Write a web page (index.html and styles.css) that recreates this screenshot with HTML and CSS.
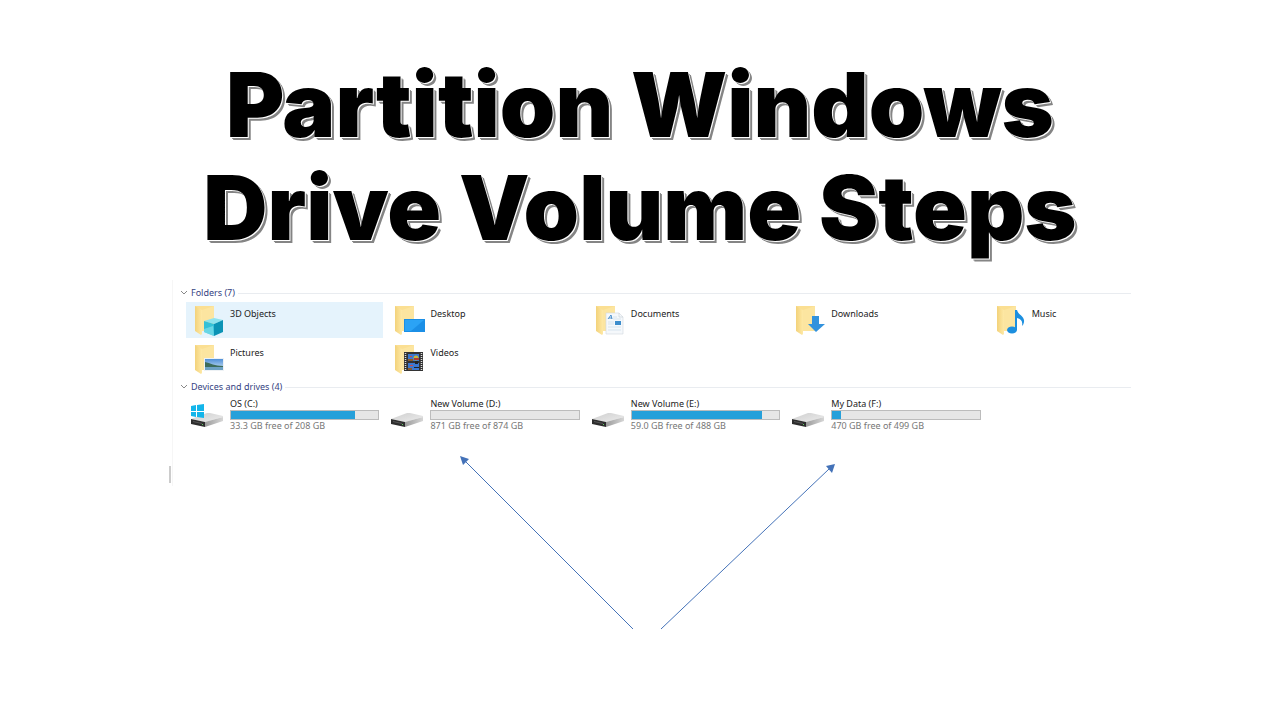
FILE: index.html
```
<!DOCTYPE html>
<html lang="en">

<head>
    <meta charset="UTF-8">
    <meta name="viewport" content="width=device-width, initial-scale=1.0">
    <title>Partition Windows Drive Volume Steps</title>
    <link rel="stylesheet" href="styles.css">
</head>

<body>
    <!-- shared icon shapes -->
    <svg class="defs" width="0" height="0" aria-hidden="true">
        <defs>
            <linearGradient id="folderFront" x1="0" y1="0" x2="1" y2="0">
                <stop offset="0" stop-color="#f3d27a" />
                <stop offset="1" stop-color="#fee9a6" />
            </linearGradient>
            <linearGradient id="driveTop" x1="0" y1="0" x2="1" y2="1">
                <stop offset="0" stop-color="#cfcfcf" />
                <stop offset="1" stop-color="#ececec" />
            </linearGradient>
            <linearGradient id="driveSide" x1="0" y1="0" x2="1" y2="0">
                <stop offset="0" stop-color="#9c9c9c" />
                <stop offset="1" stop-color="#d6d6d6" />
            </linearGradient>
            <linearGradient id="sky" x1="0" y1="0" x2="0" y2="1">
                <stop offset="0" stop-color="#4f8fd8" />
                <stop offset="1" stop-color="#d5e9f5" />
            </linearGradient>
            <symbol id="folder" viewBox="0 0 36 32">
                <path d="M5 1h19v25H10z" fill="#fbdf92" />
                <path d="M5 1l7 4v24l-1 1-6-4z" fill="url(#folderFront)" />
                <path d="M12 5l12-4v25H12z" fill="#fce5a0" />
            </symbol>
            <symbol id="drive" viewBox="0 0 36 32">
                <path d="M1 21l16-6h3l13 3v1l-18 5z" fill="url(#driveTop)" />
                <path d="M1 21l14 3v5L1 26z" fill="#2d2d2d" />
                <path d="M15 24l18-5v4l-18 6z" fill="url(#driveSide)" />
                <path d="M3 23l9 2v1l-9-2z" fill="#555" />
                <path d="M12 26h1v1h-1z" fill="#5fd35f" />
            </symbol>
        </defs>
    </svg>

    <main class="slide">
        <h1 class="title">Partition Windows<br>Drive Volume Steps</h1>

        <div class="explorer">
            <section class="group">
                <h2 class="group-title">
                    <svg class="chevron" viewBox="0 0 8 6"><path d="M1 1l3 3 3-3" /></svg>
                    Folders (7)
                </h2>
                <div class="grid folders">
                    <a class="item selected" href="#">
                        <svg class="icon" viewBox="0 0 36 32">
                            <use href="#folder" />
                            <path d="M14 16l10-3 9 2-9 4z" fill="#8fe3ee" />
                            <path d="M14 16l10 3v12l-10-4z" fill="#35c1d8" />
                            <path d="M24 19l9-4v12l-9 4z" fill="#0b93b5" />
                            <path d="M14 24l9-3 1 10-10-4z" fill="#8ce4ee" opacity=".6" />
                        </svg>
                        <span class="name">3D Objects</span>
                    </a>
                    <a class="item" href="#">
                        <svg class="icon" viewBox="0 0 36 32">
                            <use href="#folder" />
                            <path d="M14 14h21v13H14z" fill="#1b8fe6" />
                            <path d="M15 15h19l-13 11h-6z" fill="#2ba3f5" />
                        </svg>
                        <span class="name">Desktop</span>
                    </a>
                    <a class="item" href="#">
                        <svg class="icon" viewBox="0 0 36 32">
                            <use href="#folder" />
                            <path d="M15 8h13l4 4v17H15z" fill="#f5f8fb" stroke="#d0d7de" stroke-width=".6" />
                            <path d="M28 8v4h4" fill="none" stroke="#c4ccd4" stroke-width=".6" />
                            <path d="M17 14l3-4 1 4M18 13h3" fill="none" stroke="#3b86c6" stroke-width=".9" />
                            <path d="M22 12h4M22 14h8M17 17h6M17 19h6M17 22h13M17 25h13" stroke="#cbdcea" stroke-width=".7" />
                            <path d="M24 16h6v4h-6z" fill="#3d8dcc" />
                        </svg>
                        <span class="name">Documents</span>
                    </a>
                    <a class="item" href="#">
                        <svg class="icon" viewBox="0 0 36 32">
                            <use href="#folder" />
                            <path d="M21 11h7v8h6l-9 8-8-8h4z" fill="#3292dd" />
                        </svg>
                        <span class="name">Downloads</span>
                    </a>
                    <a class="item" href="#">
                        <svg class="icon" viewBox="0 0 36 32">
                            <use href="#folder" />
                            <ellipse cx="20" cy="25" rx="5" ry="3.500" fill="#1c8fdf" />
                            <path d="M23 5h2c1 5 8 6 7 12-.3 2-1 3-2 4 1-5-1-7-5-8v12h-2z" fill="#1c8fdf" />
                        </svg>
                        <span class="name">Music</span>
                    </a>
                    <a class="item" href="#">
                        <svg class="icon" viewBox="0 0 36 32">
                            <use href="#folder" />
                            <path d="M14 14h20v13H14z" fill="#eef2f5" />
                            <path d="M15 15h18v11H15z" fill="url(#sky)" />
                            <path d="M15 18c5 1 10 4 18 4v1H15z" fill="#3d6c5a" />
                            <path d="M15 23h18v3H15z" fill="#6ea2c4" />
                        </svg>
                        <span class="name">Pictures</span>
                    </a>
                    <a class="item" href="#">
                        <svg class="icon" viewBox="0 0 36 32">
                            <use href="#folder" />
                            <path d="M14 8h19v19H14z" fill="#333" />
                            <path d="M15.500 9v18M31.500 9v18" stroke="#ddd" stroke-width="1.500" stroke-dasharray="1 1" />
                            <path d="M18 10h11v7H18zM18 19h11v7H18z" fill="#3c78cf" />
                            <path d="M18 15h5v2h-5zM18 24h4v2h-4z" fill="#8b5a2b" />
                            <circle cx="26" cy="14" r="2.500" fill="#c8b93a" />
                            <path d="M24 14h5v2h-5z" fill="#b03a35" />
                            <path d="M25 17h3v3h-3zM24 23h5v1h-5z" fill="#222" />
                            <path d="M20 12h2v1h-2zM20 21h3v1h-3z" fill="#d5483f" />
                        </svg>
                        <span class="name">Videos</span>
                    </a>
                </div>
            </section>

            <section class="group">
                <h2 class="group-title">
                    <svg class="chevron" viewBox="0 0 8 6"><path d="M1 1l3 3 3-3" /></svg>
                    Devices and drives (4)
                </h2>
                <div class="grid drives">
                    <a class="item" href="#">
                        <svg class="icon" viewBox="0 0 36 32">
                            <use href="#drive" />
                            <path d="M1 8l5-1v6H1zM7 7l7-1v7H7zM1 14h5v5l-5-1zM7 14h7v6l-7-1z" fill="#13b5ea" />
                        </svg>
                        <span class="info">
                            <span class="name">OS (C:)</span>
                            <span class="bar"><span class="used" style="width: 84%"></span></span>
                            <span class="free">33.3 GB free of 208 GB</span>
                        </span>
                    </a>
                    <a class="item" href="#">
                        <svg class="icon" viewBox="0 0 36 32"><use href="#drive" /></svg>
                        <span class="info">
                            <span class="name">New Volume (D:)</span>
                            <span class="bar"><span class="used" style="width: 0%"></span></span>
                            <span class="free">871 GB free of 874 GB</span>
                        </span>
                    </a>
                    <a class="item" href="#">
                        <svg class="icon" viewBox="0 0 36 32"><use href="#drive" /></svg>
                        <span class="info">
                            <span class="name">New Volume (E:)</span>
                            <span class="bar"><span class="used" style="width: 88%"></span></span>
                            <span class="free">59.0 GB free of 488 GB</span>
                        </span>
                    </a>
                    <a class="item" href="#">
                        <svg class="icon" viewBox="0 0 36 32"><use href="#drive" /></svg>
                        <span class="info">
                            <span class="name">My Data (F:)</span>
                            <span class="bar"><span class="used" style="width: 6%"></span></span>
                            <span class="free">470 GB free of 499 GB</span>
                        </span>
                    </a>
                </div>
            </section>

            <span class="scroll-stub"></span>

            <!-- arrows pointing at the D: and F: volumes -->
            <svg class="arrows" viewBox="0 0 380 176" aria-hidden="true">
                <path class="line" d="M176 174L8 6M204 174L372 14" />
                <path class="head" d="M3 1l9 3-6 6zM378 9l-9 2 6 7z" />
            </svg>
        </div>
    </main>
</body>

</html>
```
FILE: styles.css
```
* {
    box-sizing: border-box;
}

body {
    margin: 0;
    background: #fff;
    font-family: "Noto Sans", "Open Sans", sans-serif;
    color: #222;
}

.defs {
    position: absolute;
}

.slide {
    min-height: 100vh;
    padding-top: 53px;
}

.title {
    margin: 0;
    font-family: Inter, "Liberation Sans", sans-serif;
    font-size: 89px;
    font-weight: 900;
    line-height: 103px;
    text-align: center;
    white-space: nowrap;
    color: #000;
    text-shadow: 1px 1px 0 #fff, 2px 2px 0 #858585, 3px 3px 0 #858585;
}

.explorer {
    position: relative;
    margin: 21px 149px 0 172px;
    padding: 5px 0 54px 7px;
    border-left: 1px solid #f6f6f6;
}

.group-title {
    display: flex;
    align-items: center;
    gap: 3px;
    margin: 0;
    font-size: 9px;
    font-weight: 400;
    line-height: 16px;
    color: #354382;
}

.group-title::after {
    content: "";
    flex: 1;
    height: 1px;
    background: #e9ecf0;
}

.chevron {
    width: 8px;
    height: 6px;
    fill: none;
    stroke: #888;
}

.grid {
    display: grid;
    grid-template-columns: repeat(4, 200fr) 143fr;
    padding-left: 6px;
}

.folders {
    row-gap: 3px;
    padding-top: 1px;
    padding-bottom: 2px;
}

.item {
    display: flex;
    gap: 4px;
    margin-right: 3px;
    padding: 3px 4px 0;
    font-size: 9px;
    line-height: 12px;
    color: #222;
    text-decoration: none;
}

.folders .item {
    height: 36px;
}

.folders .name {
    margin-top: 3px;
}

.selected {
    background: #e5f3fc;
}

.icon {
    flex: none;
    width: 36px;
    height: 32px;
}

.info {
    flex: 1;
    display: flex;
    flex-direction: column;
}

.bar {
    height: 10px;
    border: 1px solid #bcbcbc;
    background: #e6e6e6;
}

.used {
    display: block;
    height: 100%;
    background: #26a0da;
}

.free {
    color: #777;
}

.scroll-stub {
    position: absolute;
    left: -4px;
    bottom: 3px;
    width: 2px;
    height: 17px;
    background: #ccc;
}

.arrows {
    position: absolute;
    top: 175px;
    left: 284px;
    width: 380px;
    height: 176px;
}

.arrows .line {
    fill: none;
    stroke: #4472b8;
    stroke-width: 1;
}

.arrows .head {
    fill: #4472b8;
}
```
